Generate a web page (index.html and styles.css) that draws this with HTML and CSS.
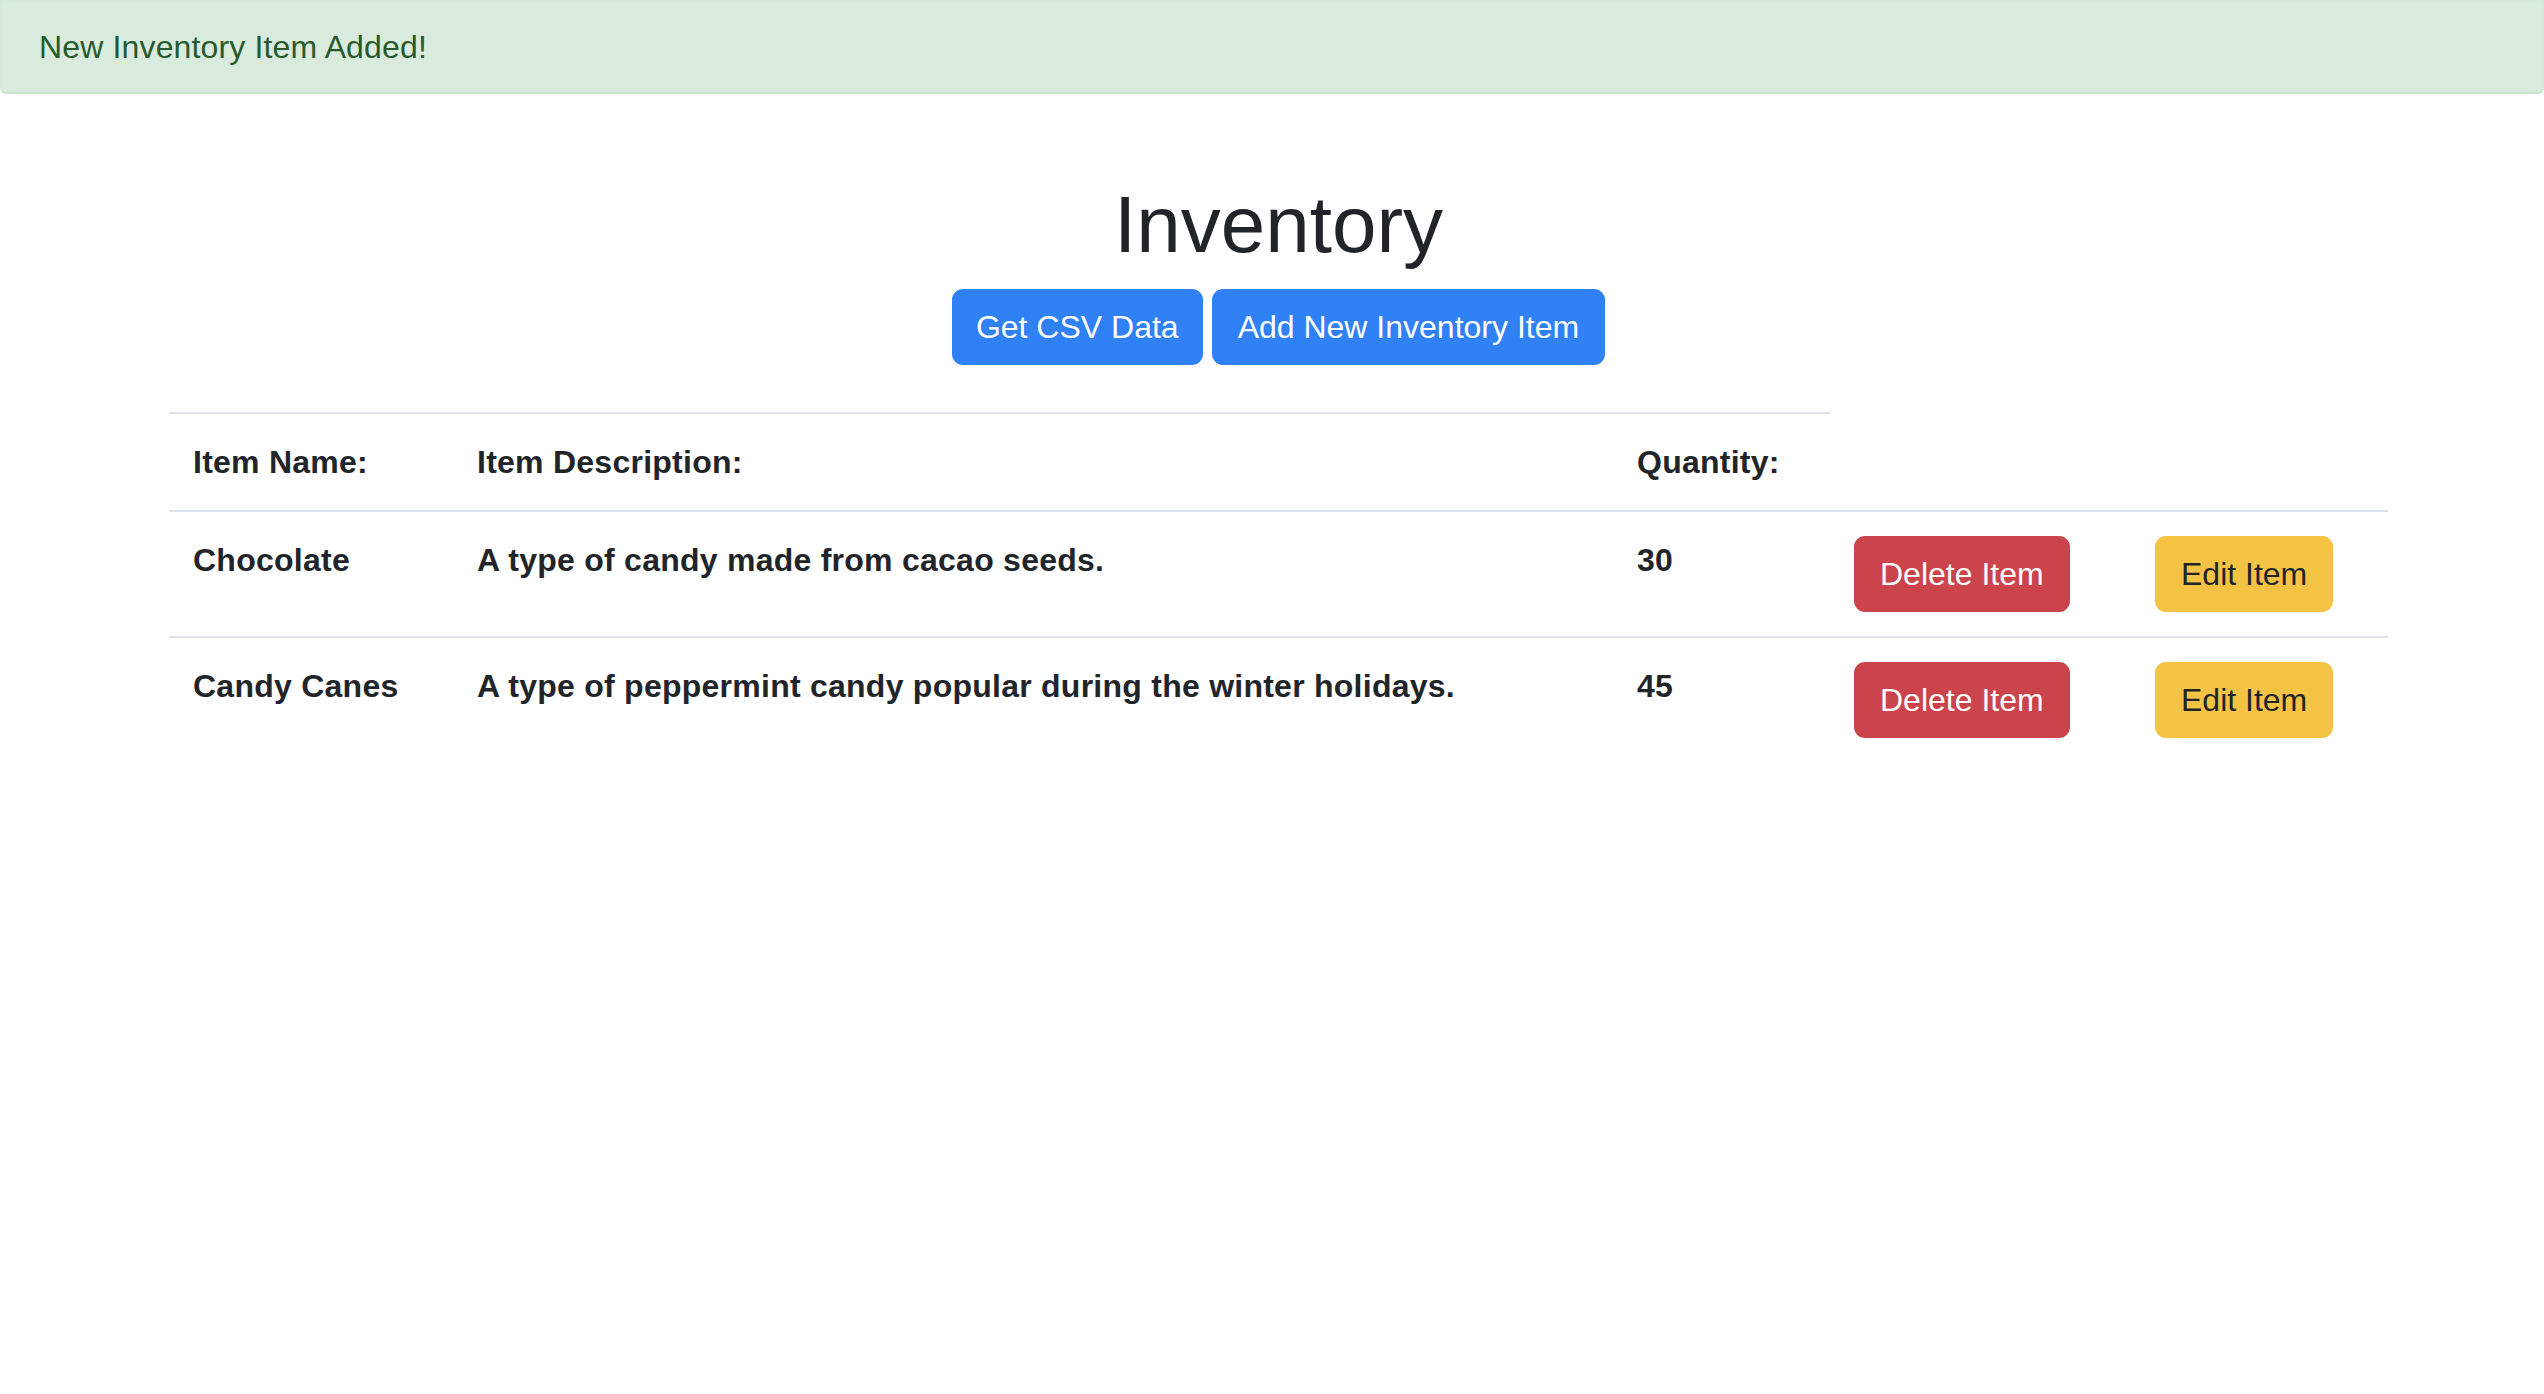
FILE: index.html
```html
<!DOCTYPE html>
<html lang="en">
<head>
<meta charset="utf-8">
<title>Inventory</title>
<link rel="stylesheet" href="styles.css">
</head>
<body>
<div class="alert">New Inventory Item Added!</div>
<main class="page">
  <h1 class="title">Inventory</h1>
  <div class="actions">
    <button class="btn btn-primary">Get CSV Data</button>
    <button class="btn btn-primary">Add New Inventory Item</button>
  </div>
  <table class="table">
    <colgroup>
      <col class="c1"><col class="c2"><col class="c3"><col class="c4"><col class="c5">
    </colgroup>
    <thead>
      <tr>
        <th>Item Name:</th>
        <th>Item Description:</th>
        <th>Quantity:</th>
      </tr>
    </thead>
    <tbody>
      <tr>
        <td>Chocolate</td>
        <td>A type of candy made from cacao seeds.</td>
        <td>30</td>
        <td><button class="btn btn-danger">Delete Item</button></td>
        <td><button class="btn btn-warning">Edit Item</button></td>
      </tr>
      <tr>
        <td>Candy Canes</td>
        <td>A type of peppermint candy popular during the winter holidays.</td>
        <td>45</td>
        <td><button class="btn btn-danger">Delete Item</button></td>
        <td><button class="btn btn-warning">Edit Item</button></td>
      </tr>
    </tbody>
  </table>
</main>
</body>
</html>
```
FILE: styles.css
```css
html, body {
  margin: 0;
  padding: 0;
  background: #ffffff;
}
body {
  font-family: "Liberation Sans", Arial, sans-serif;
  font-size: 32px;
  line-height: 48px;
  color: #212529;
}
.alert {
  background: #d9ebdc;
  color: #275a2c;
  border: 2px solid #d6eada;
  border-bottom-color: #c6e2cb;
  border-radius: 0 0 6px 6px;
  padding: 21px 37px;
  line-height: 48px;
  margin: 0 0 83px;
  letter-spacing: 0.15px;
}
.page {
  padding: 0 156px 0 169px;
}
.title {
  margin: 0 0 16px;
  font-size: 80px;
  line-height: 96px;
  font-weight: 400;
  text-align: center;
  color: #212529;
}
.actions {
  display: flex;
  justify-content: center;
  gap: 9px;
  margin-bottom: 47px;
}
.btn {
  font-family: "Liberation Sans", Arial, sans-serif;
  font-size: 32px;
  height: 76px;
  line-height: 72px;
  padding: 0 24px;
  border: 2px solid transparent;
  border-radius: 11px;
  cursor: pointer;
}
.btn-primary {
  background: #3080f6;
  border-color: #3080f6;
  color: #ffffff;
}
.btn-primary.btn:first-child {
  padding: 0 22px;
}
.btn-danger {
  background: #cc444b;
  border-color: #cc444b;
  color: #ffffff;
}
.btn-warning {
  background: #f5c344;
  border-color: #f5c344;
  color: #212529;
}
.table {
  width: 100%;
  table-layout: fixed;
  border-collapse: separate;
  border-spacing: 0;
}
.c1 { width: 284px; }
.c2 { width: 1160px; }
.c3 { width: 217px; }
.c4 { width: 301px; }
.c5 { width: 257px; }
.table th,
.table td {
  padding: 24px;
  border-top: 2px solid #dee2e6;
  text-align: left;
  vertical-align: top;
  font-weight: 700;
  line-height: 48px;
  white-space: nowrap;
  letter-spacing: 0.25px;
}
```
